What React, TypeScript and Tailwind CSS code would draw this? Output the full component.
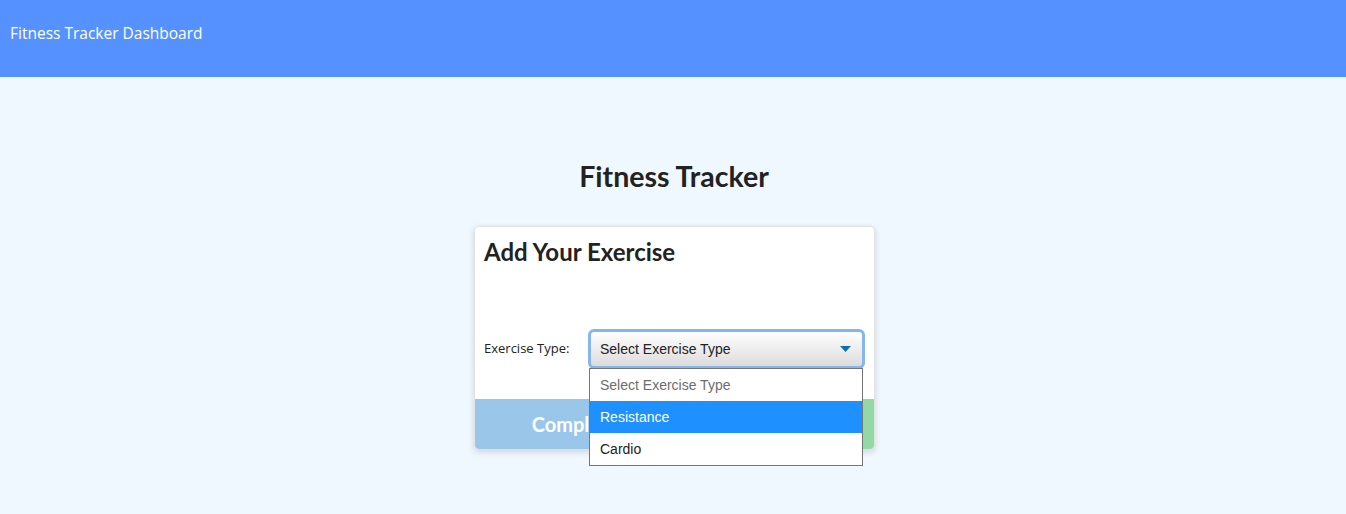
import { useState } from "react";

const options = ["Select Exercise Type", "Resistance", "Cardio"];

function ExerciseSelect() {
  const [active] = useState(1);

  return (
    <div className="relative w-[277px] shrink-0">
      <div className="flex h-[40px] items-center justify-between rounded-[6px] border-[3px] border-[#86b6ee] bg-gradient-to-b from-white to-[#dcdcdc] pl-[9px] pr-[10px] text-[14px] text-[#222]">
        <span>Select Exercise Type</span>
        <svg width="11" height="6" viewBox="0 0 11 6" className="mr-[1px]">
          <path d="M0 0 L11 0 L5.5 6 Z" fill="#0a72a8" />
        </svg>
      </div>
      {/* open option list */}
      <div className="absolute left-[1px] top-[39px] z-10 w-[274px] border border-[#767676] bg-white text-[14px]">
        {options.map((opt, i) => (
          <div
            key={opt}
            className={`flex h-[32px] items-center px-[10px] ${
              i === active ? "bg-[#1e90ff] text-white" : i === 0 ? "text-[#6d6d6d]" : "text-[#222]"
            }`}
          >
            {opt}
          </div>
        ))}
      </div>
    </div>
  );
}

export default function App() {
  return (
    <div className="min-h-[514px] bg-[#f0f8ff]" style={{ fontFamily: "'Liberation Sans', Arial, sans-serif" }}>
      <nav className="h-[77px] bg-[#5592ff] px-[10px] pt-[22px]">
        <span className="text-[15.5px] text-white" style={{ fontFamily: "'Open Sans', sans-serif" }}>
          Fitness Tracker Dashboard
        </span>
      </nav>

      <main className="flex flex-col items-center pt-[80px]">
        <h1 className="ml-[2px] text-[28.5px] font-bold leading-[38px] text-[#222]" style={{ fontFamily: "Lato, sans-serif" }}>
          Fitness Tracker
        </h1>

        <div className="ml-[3px] mt-[31px] w-[401px] rounded-[4px] border border-[#e2e2e2] bg-white shadow-[0_2px_6px_rgba(0,0,0,0.15)]">
          <h2 className="px-[9px] pt-[10px] text-[24px] font-bold leading-[30px] text-[#222]" style={{ fontFamily: "Lato, sans-serif" }}>
            Add Your Exercise
          </h2>

          <div className="mt-[62px] flex items-center gap-[19px] pl-[9px]">
            <label className="w-[85px] shrink-0 whitespace-nowrap text-[13px] text-[#222]" style={{ fontFamily: "'Open Sans', sans-serif" }}>
              Exercise Type:
            </label>
            <ExerciseSelect />
          </div>

          <div className="mt-[30px] flex h-[50px] overflow-hidden rounded-b-[4px]" style={{ fontFamily: "Lato, sans-serif" }}>
            <button className="flex-1 bg-[#9ac6e9] text-[20px] font-bold text-white">Complete</button>
            <button className="flex-1 bg-[#93d9a5] text-[20px] font-bold text-white">Add Exercise</button>
          </div>
        </div>
      </main>
    </div>
  );
}
